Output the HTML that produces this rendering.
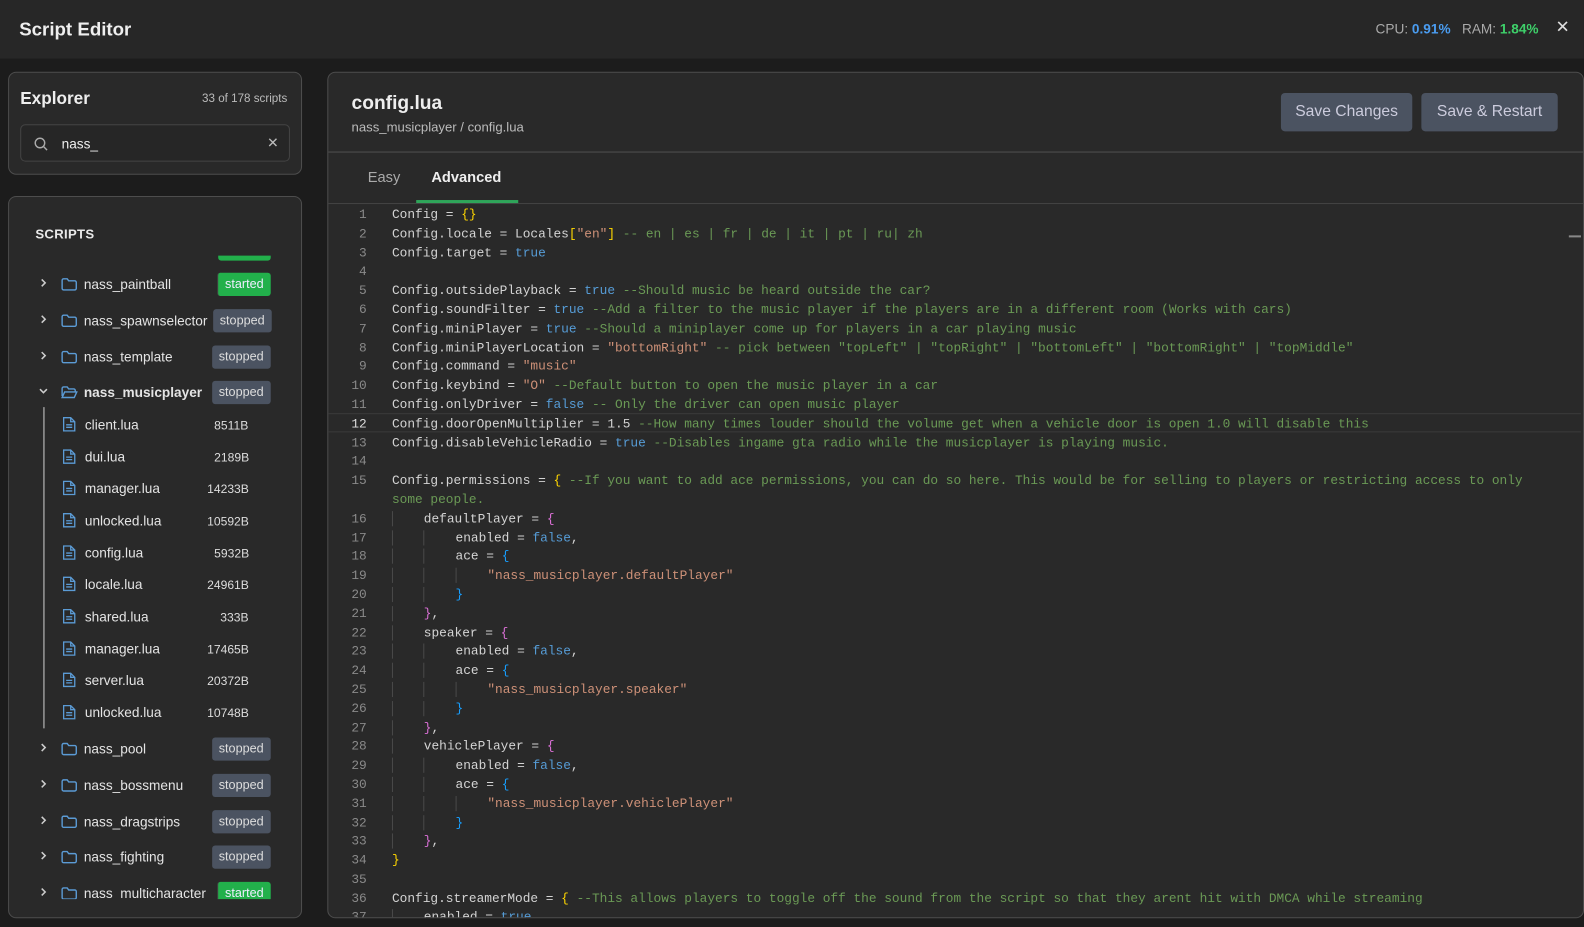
<!DOCTYPE html>
<html><head><meta charset="utf-8"><style>
*{box-sizing:border-box;margin:0;padding:0}
body{width:1584px;height:927px;background:#1c1c1c;font-family:"Liberation Sans",sans-serif;color:#e6e6e6;position:relative;overflow:hidden}
#w{position:absolute;left:0;top:0;width:1568px;height:918px;transform:scale(1.0102);transform-origin:0 0}
.top{position:absolute;left:0;top:0;width:1568px;height:58px;background:#272727}
.title{position:absolute;left:19px;top:18px;font-size:18.5px;font-weight:bold;color:#eee}
.stats{position:absolute;right:45px;top:21px;font-size:13.5px;color:#aaa}
.stats b{font-weight:bold}
.x{position:absolute;right:14px;top:17px;font-size:17px;color:#ddd}
.panel{position:absolute;background:#292929;border:1px solid #4d4d4d;border-radius:8px}
.sb{position:absolute;left:20px;top:123px;width:267px;height:37px;border:1px solid #444;border-radius:5px;background:#262626}
.row{position:absolute;left:35px;height:24px;font-size:13.5px;color:#e4e4e4;width:240px}
.row .chev{position:absolute;left:2px;top:5px}
.row .fold{position:absolute;left:25px;top:5px}
.row .nm{position:absolute;left:48px;top:5px}
.badge{position:absolute;right:7px;top:1px;height:23px;border-radius:3px;font-size:12.5px;line-height:23px;padding:0 7px;color:#ddd;background:#4b5361}
.badge.g{background:#22b04b;color:#eef}
.file{position:absolute;left:60px;font-size:13.5px;color:#e4e4e4;width:190px;height:20px}
.file .nm{position:absolute;left:24px;top:3px}
.file .sz{position:absolute;left:152px;top:4px;font-size:12px;color:#ddd}
.btn{position:absolute;top:92px;height:38px;background:#4b5361;border-radius:4px;color:#ccd;font-size:15.5px;line-height:38px;text-align:center}
.code{position:absolute;left:325px;top:204px;width:1240px;height:704px;overflow:hidden;font-family:"Liberation Mono",monospace;font-size:12.7px;color:#d4d4d4}
.l{height:18.8px;line-height:18.8px;white-space:pre;position:relative}
.n{position:absolute;left:0;width:38px;text-align:right;color:#8a8a8a}
.t{position:absolute;left:63px}
.c{color:#6a9955}.s{color:#ce9178}.k{color:#569cd6}.y{color:#ffd700}.p{color:#da70d6}.b{color:#179fff}
.g{border-left:1px solid #4a4a4a}
</style></head><body><div id="w">
<div class="top"><div class="title">Script Editor</div>
<div class="stats">CPU: <b style="color:#4a9cf0">0.91%</b>&nbsp;&nbsp; RAM: <b style="color:#3ed06a">1.84%</b></div>
<div class="x">✕</div></div>

<div class="panel" style="left:8px;top:71px;width:291px;height:102px"></div>
<div style="position:absolute;left:20px;top:88px;font-size:17px;font-weight:bold;color:#eee">Explorer</div>
<div style="position:absolute;left:200px;top:92px;font-size:11.5px;color:#bbb">33 of 178 scripts</div>
<div class="sb"><svg style="position:absolute;left:12px;top:11px" width="15" height="15" viewBox="0 0 16 16" fill="none" stroke="#aaa" stroke-width="1.5"><circle cx="7" cy="7" r="5"/><path d="M11 11l3.5 3.5"/></svg>
<div style="position:absolute;left:40px;top:11px;font-size:13.5px;color:#eee">nass_</div>
<div style="position:absolute;right:10px;top:9px;font-size:14px;color:#bbb">✕</div></div>

<div class="panel" style="left:8px;top:194px;width:291px;height:715px;overflow:hidden">
<div style="position:absolute;left:26px;top:29px;font-size:13px;font-weight:bold;color:#e8e8e8;letter-spacing:.3px">SCRIPTS</div>
<div style="position:absolute;left:207px;top:58px;width:52px;height:5px;background:#22b04b;border-radius:0 0 3px 3px"></div>
</div>
<div style="position:absolute;left:43px;top:403px;width:1px;height:318px;background:#cfcfcf"></div>

<div class="panel" style="left:324px;top:71px;width:1244px;height:838px"></div>
<div style="position:absolute;left:348px;top:92px;font-size:19px;font-weight:bold;color:#eee">config.lua</div>
<div style="position:absolute;left:348px;top:118px;font-size:13px;color:#bbb">nass_musicplayer / config.lua</div>
<div class="btn" style="left:1268px;width:130px">Save Changes</div>
<div class="btn" style="left:1407px;width:135px">Save &amp; Restart</div>
<div style="position:absolute;left:325px;top:150px;width:1242px;height:1px;background:#505050"></div>
<div style="position:absolute;left:364px;top:168px;font-size:14.5px;color:#aaa">Easy</div>
<div style="position:absolute;left:427px;top:168px;font-size:14.5px;font-weight:bold;color:#eee">Advanced</div>
<div style="position:absolute;left:325px;top:201px;width:1242px;height:1px;background:#444"></div>
<div style="position:absolute;left:412px;top:198px;width:101px;height:3px;background:#2fa55a"></div>
<div style="position:absolute;left:325px;top:409px;width:1240px;height:19px;border-top:1px solid #3a3a3a;border-bottom:1px solid #3a3a3a"></div>
<div style="position:absolute;left:1553px;top:233px;width:12px;height:2px;background:#888"></div>

<div class="code">
<div class="l"><span class="n">1</span><span class="t">Config = <span class="y">{}</span></span></div>
<div class="l"><span class="n">2</span><span class="t">Config.locale = Locales<span class="y">[</span><span class="s">"en"</span><span class="y">]</span> <span class="c">-- en | es | fr | de | it | pt | ru| zh</span></span></div>
<div class="l"><span class="n">3</span><span class="t">Config.target = <span class="k">true</span></span></div>
<div class="l"><span class="n">4</span><span class="t"></span></div>
<div class="l"><span class="n">5</span><span class="t">Config.outsidePlayback = <span class="k">true</span> <span class="c">--Should music be heard outside the car?</span></span></div>
<div class="l"><span class="n">6</span><span class="t">Config.soundFilter = <span class="k">true</span> <span class="c">--Add a filter to the music player if the players are in a different room (Works with cars)</span></span></div>
<div class="l"><span class="n">7</span><span class="t">Config.miniPlayer = <span class="k">true</span> <span class="c">--Should a miniplayer come up for players in a car playing music</span></span></div>
<div class="l"><span class="n">8</span><span class="t">Config.miniPlayerLocation = <span class="s">"bottomRight"</span> <span class="c">-- pick between "topLeft" | "topRight" | "bottomLeft" | "bottomRight" | "topMiddle"</span></span></div>
<div class="l"><span class="n">9</span><span class="t">Config.command = <span class="s">"music"</span></span></div>
<div class="l"><span class="n">10</span><span class="t">Config.keybind = <span class="s">"O"</span> <span class="c">--Default button to open the music player in a car</span></span></div>
<div class="l"><span class="n">11</span><span class="t">Config.onlyDriver = <span class="k">false</span> <span class="c">-- Only the driver can open music player</span></span></div>
<div class="l"><span class="n" style="color:#ddd">12</span><span class="t">Config.doorOpenMultiplier = 1.5 <span class="c">--How many times louder should the volume get when a vehicle door is open 1.0 will disable this</span></span></div>
<div class="l"><span class="n">13</span><span class="t">Config.disableVehicleRadio = <span class="k">true</span> <span class="c">--Disables ingame gta radio while the musicplayer is playing music.</span></span></div>
<div class="l"><span class="n">14</span><span class="t"></span></div>
<div class="l"><span class="n">15</span><span class="t">Config.permissions = <span class="y">{</span> <span class="c">--If you want to add ace permissions, you can do so here. This would be for selling to players or restricting access to only</span></span></div>
<div class="l"><span class="t c">some people.</span></div>
<div class="l"><span class="n">16</span><span class="t"><span class="g">    </span>defaultPlayer = <span class="p">{</span></span></div>
<div class="l"><span class="n">17</span><span class="t"><span class="g">    </span><span class="g">    </span>enabled = <span class="k">false</span>,</span></div>
<div class="l"><span class="n">18</span><span class="t"><span class="g">    </span><span class="g">    </span>ace = <span class="b">{</span></span></div>
<div class="l"><span class="n">19</span><span class="t"><span class="g">    </span><span class="g">    </span><span class="g">    </span><span class="s">"nass_musicplayer.defaultPlayer"</span></span></div>
<div class="l"><span class="n">20</span><span class="t"><span class="g">    </span><span class="g">    </span><span class="b">}</span></span></div>
<div class="l"><span class="n">21</span><span class="t"><span class="g">    </span><span class="p">}</span>,</span></div>
<div class="l"><span class="n">22</span><span class="t"><span class="g">    </span>speaker = <span class="p">{</span></span></div>
<div class="l"><span class="n">23</span><span class="t"><span class="g">    </span><span class="g">    </span>enabled = <span class="k">false</span>,</span></div>
<div class="l"><span class="n">24</span><span class="t"><span class="g">    </span><span class="g">    </span>ace = <span class="b">{</span></span></div>
<div class="l"><span class="n">25</span><span class="t"><span class="g">    </span><span class="g">    </span><span class="g">    </span><span class="s">"nass_musicplayer.speaker"</span></span></div>
<div class="l"><span class="n">26</span><span class="t"><span class="g">    </span><span class="g">    </span><span class="b">}</span></span></div>
<div class="l"><span class="n">27</span><span class="t"><span class="g">    </span><span class="p">}</span>,</span></div>
<div class="l"><span class="n">28</span><span class="t"><span class="g">    </span>vehiclePlayer = <span class="p">{</span></span></div>
<div class="l"><span class="n">29</span><span class="t"><span class="g">    </span><span class="g">    </span>enabled = <span class="k">false</span>,</span></div>
<div class="l"><span class="n">30</span><span class="t"><span class="g">    </span><span class="g">    </span>ace = <span class="b">{</span></span></div>
<div class="l"><span class="n">31</span><span class="t"><span class="g">    </span><span class="g">    </span><span class="g">    </span><span class="s">"nass_musicplayer.vehiclePlayer"</span></span></div>
<div class="l"><span class="n">32</span><span class="t"><span class="g">    </span><span class="g">    </span><span class="b">}</span></span></div>
<div class="l"><span class="n">33</span><span class="t"><span class="g">    </span><span class="p">}</span>,</span></div>
<div class="l"><span class="n">34</span><span class="t"><span class="y">}</span></span></div>
<div class="l"><span class="n">35</span><span class="t"></span></div>
<div class="l"><span class="n">36</span><span class="t">Config.streamerMode = <span class="y">{</span> <span class="c">--This allows players to toggle off the sound from the script so that they arent hit with DMCA while streaming</span></span></div>
<div class="l"><span class="n">37</span><span class="t"><span class="g">    </span>enabled = <span class="k">true</span></span></div>
</div>

<div style="position:absolute;left:0;top:0">
<div class="row" style="top:269px"><svg class="chev" width="12" height="12" viewBox="0 0 14 14" fill="none" stroke="#ccc" stroke-width="1.8"><path d="M5 3l4 4-4 4"/></svg><svg class="fold" width="17" height="15" viewBox="0 0 17 15" fill="none" stroke="#5b9bd5" stroke-width="1.4"><path d="M1.5 3.5a1.5 1.5 0 0 1 1.5-1.5h3.5l1.5 2h6a1.5 1.5 0 0 1 1.5 1.5v6a1.5 1.5 0 0 1-1.5 1.5h-11a1.5 1.5 0 0 1-1.5-1.5z"/></svg><span class="nm">nass_paintball</span><span class="badge g">started</span></div>
<div class="row" style="top:305px"><svg class="chev" width="12" height="12" viewBox="0 0 14 14" fill="none" stroke="#ccc" stroke-width="1.8"><path d="M5 3l4 4-4 4"/></svg><svg class="fold" width="17" height="15" viewBox="0 0 17 15" fill="none" stroke="#5b9bd5" stroke-width="1.4"><path d="M1.5 3.5a1.5 1.5 0 0 1 1.5-1.5h3.5l1.5 2h6a1.5 1.5 0 0 1 1.5 1.5v6a1.5 1.5 0 0 1-1.5 1.5h-11a1.5 1.5 0 0 1-1.5-1.5z"/></svg><span class="nm">nass_spawnselector</span><span class="badge" style="right:6px">stopped</span></div>
<div class="row" style="top:341px"><svg class="chev" width="12" height="12" viewBox="0 0 14 14" fill="none" stroke="#ccc" stroke-width="1.8"><path d="M5 3l4 4-4 4"/></svg><svg class="fold" width="17" height="15" viewBox="0 0 17 15" fill="none" stroke="#5b9bd5" stroke-width="1.4"><path d="M1.5 3.5a1.5 1.5 0 0 1 1.5-1.5h3.5l1.5 2h6a1.5 1.5 0 0 1 1.5 1.5v6a1.5 1.5 0 0 1-1.5 1.5h-11a1.5 1.5 0 0 1-1.5-1.5z"/></svg><span class="nm">nass_template</span><span class="badge">stopped</span></div>
<div class="row" style="top:376px"><svg class="chev" width="12" height="12" viewBox="0 0 14 14" fill="none" stroke="#ccc" stroke-width="1.8"><path d="M3 5l4 4 4-4"/></svg><svg class="fold" width="17" height="15" viewBox="0 0 17 15" fill="none" stroke="#5b9bd5" stroke-width="1.4"><path d="M1.5 11V3.5A1.5 1.5 0 0 1 3 2h3.5l1.5 2h5a1.5 1.5 0 0 1 1.5 1.5V7M1.5 12.5l2.5-5.5h12l-2.5 5.5z"/></svg><span class="nm" style="font-weight:bold">nass_musicplayer</span><span class="badge">stopped</span></div>
</div>
<div style="position:absolute;left:0;top:0">
<div class="file" style="top:410px"><svg style="position:absolute;left:2px;top:2px" width="13" height="16" viewBox="0 0 13 16" fill="none" stroke="#5b9bd5" stroke-width="1.3"><path d="M1 1.5h7l4 4v9H1zM8 1.5v4h4M3.5 8.5h6M3.5 11h6"/></svg><span class="nm">client.lua</span><span class="sz">8511B</span></div>
<div class="file" style="top:442px"><svg style="position:absolute;left:2px;top:2px" width="13" height="16" viewBox="0 0 13 16" fill="none" stroke="#5b9bd5" stroke-width="1.3"><path d="M1 1.5h7l4 4v9H1zM8 1.5v4h4M3.5 8.5h6M3.5 11h6"/></svg><span class="nm">dui.lua</span><span class="sz">2189B</span></div>
<div class="file" style="top:473px"><svg style="position:absolute;left:2px;top:2px" width="13" height="16" viewBox="0 0 13 16" fill="none" stroke="#5b9bd5" stroke-width="1.3"><path d="M1 1.5h7l4 4v9H1zM8 1.5v4h4M3.5 8.5h6M3.5 11h6"/></svg><span class="nm">manager.lua</span><span class="sz" style="left:145px">14233B</span></div>
<div class="file" style="top:505px"><svg style="position:absolute;left:2px;top:2px" width="13" height="16" viewBox="0 0 13 16" fill="none" stroke="#5b9bd5" stroke-width="1.3"><path d="M1 1.5h7l4 4v9H1zM8 1.5v4h4M3.5 8.5h6M3.5 11h6"/></svg><span class="nm">unlocked.lua</span><span class="sz" style="left:145px">10592B</span></div>
<div class="file" style="top:537px"><svg style="position:absolute;left:2px;top:2px" width="13" height="16" viewBox="0 0 13 16" fill="none" stroke="#5b9bd5" stroke-width="1.3"><path d="M1 1.5h7l4 4v9H1zM8 1.5v4h4M3.5 8.5h6M3.5 11h6"/></svg><span class="nm">config.lua</span><span class="sz">5932B</span></div>
<div class="file" style="top:568px"><svg style="position:absolute;left:2px;top:2px" width="13" height="16" viewBox="0 0 13 16" fill="none" stroke="#5b9bd5" stroke-width="1.3"><path d="M1 1.5h7l4 4v9H1zM8 1.5v4h4M3.5 8.5h6M3.5 11h6"/></svg><span class="nm">locale.lua</span><span class="sz" style="left:145px">24961B</span></div>
<div class="file" style="top:600px"><svg style="position:absolute;left:2px;top:2px" width="13" height="16" viewBox="0 0 13 16" fill="none" stroke="#5b9bd5" stroke-width="1.3"><path d="M1 1.5h7l4 4v9H1zM8 1.5v4h4M3.5 8.5h6M3.5 11h6"/></svg><span class="nm">shared.lua</span><span class="sz" style="left:158px">333B</span></div>
<div class="file" style="top:632px"><svg style="position:absolute;left:2px;top:2px" width="13" height="16" viewBox="0 0 13 16" fill="none" stroke="#5b9bd5" stroke-width="1.3"><path d="M1 1.5h7l4 4v9H1zM8 1.5v4h4M3.5 8.5h6M3.5 11h6"/></svg><span class="nm">manager.lua</span><span class="sz" style="left:145px">17465B</span></div>
<div class="file" style="top:663px"><svg style="position:absolute;left:2px;top:2px" width="13" height="16" viewBox="0 0 13 16" fill="none" stroke="#5b9bd5" stroke-width="1.3"><path d="M1 1.5h7l4 4v9H1zM8 1.5v4h4M3.5 8.5h6M3.5 11h6"/></svg><span class="nm">server.lua</span><span class="sz" style="left:145px">20372B</span></div>
<div class="file" style="top:695px"><svg style="position:absolute;left:2px;top:2px" width="13" height="16" viewBox="0 0 13 16" fill="none" stroke="#5b9bd5" stroke-width="1.3"><path d="M1 1.5h7l4 4v9H1zM8 1.5v4h4M3.5 8.5h6M3.5 11h6"/></svg><span class="nm">unlocked.lua</span><span class="sz" style="left:145px">10748B</span></div>
</div>
<div style="position:absolute;left:0;top:0">
<div class="row" style="top:729px"><svg class="chev" width="12" height="12" viewBox="0 0 14 14" fill="none" stroke="#ccc" stroke-width="1.8"><path d="M5 3l4 4-4 4"/></svg><svg class="fold" width="17" height="15" viewBox="0 0 17 15" fill="none" stroke="#5b9bd5" stroke-width="1.4"><path d="M1.5 3.5a1.5 1.5 0 0 1 1.5-1.5h3.5l1.5 2h6a1.5 1.5 0 0 1 1.5 1.5v6a1.5 1.5 0 0 1-1.5 1.5h-11a1.5 1.5 0 0 1-1.5-1.5z"/></svg><span class="nm">nass_pool</span><span class="badge">stopped</span></div>
<div class="row" style="top:765px"><svg class="chev" width="12" height="12" viewBox="0 0 14 14" fill="none" stroke="#ccc" stroke-width="1.8"><path d="M5 3l4 4-4 4"/></svg><svg class="fold" width="17" height="15" viewBox="0 0 17 15" fill="none" stroke="#5b9bd5" stroke-width="1.4"><path d="M1.5 3.5a1.5 1.5 0 0 1 1.5-1.5h3.5l1.5 2h6a1.5 1.5 0 0 1 1.5 1.5v6a1.5 1.5 0 0 1-1.5 1.5h-11a1.5 1.5 0 0 1-1.5-1.5z"/></svg><span class="nm">nass_bossmenu</span><span class="badge">stopped</span></div>
<div class="row" style="top:801px"><svg class="chev" width="12" height="12" viewBox="0 0 14 14" fill="none" stroke="#ccc" stroke-width="1.8"><path d="M5 3l4 4-4 4"/></svg><svg class="fold" width="17" height="15" viewBox="0 0 17 15" fill="none" stroke="#5b9bd5" stroke-width="1.4"><path d="M1.5 3.5a1.5 1.5 0 0 1 1.5-1.5h3.5l1.5 2h6a1.5 1.5 0 0 1 1.5 1.5v6a1.5 1.5 0 0 1-1.5 1.5h-11a1.5 1.5 0 0 1-1.5-1.5z"/></svg><span class="nm">nass_dragstrips</span><span class="badge">stopped</span></div>
<div class="row" style="top:836px"><svg class="chev" width="12" height="12" viewBox="0 0 14 14" fill="none" stroke="#ccc" stroke-width="1.8"><path d="M5 3l4 4-4 4"/></svg><svg class="fold" width="17" height="15" viewBox="0 0 17 15" fill="none" stroke="#5b9bd5" stroke-width="1.4"><path d="M1.5 3.5a1.5 1.5 0 0 1 1.5-1.5h3.5l1.5 2h6a1.5 1.5 0 0 1 1.5 1.5v6a1.5 1.5 0 0 1-1.5 1.5h-11a1.5 1.5 0 0 1-1.5-1.5z"/></svg><span class="nm">nass_fighting</span><span class="badge">stopped</span></div>
<div class="row" style="top:872px;height:18px;overflow:hidden"><svg class="chev" width="12" height="12" viewBox="0 0 14 14" fill="none" stroke="#ccc" stroke-width="1.8"><path d="M5 3l4 4-4 4"/></svg><svg class="fold" width="17" height="15" viewBox="0 0 17 15" fill="none" stroke="#5b9bd5" stroke-width="1.4"><path d="M1.5 3.5a1.5 1.5 0 0 1 1.5-1.5h3.5l1.5 2h6a1.5 1.5 0 0 1 1.5 1.5v6a1.5 1.5 0 0 1-1.5 1.5h-11a1.5 1.5 0 0 1-1.5-1.5z"/></svg><span class="nm">nass_multicharacter</span><span class="badge g">started</span></div>
</div>
</div></body></html>
